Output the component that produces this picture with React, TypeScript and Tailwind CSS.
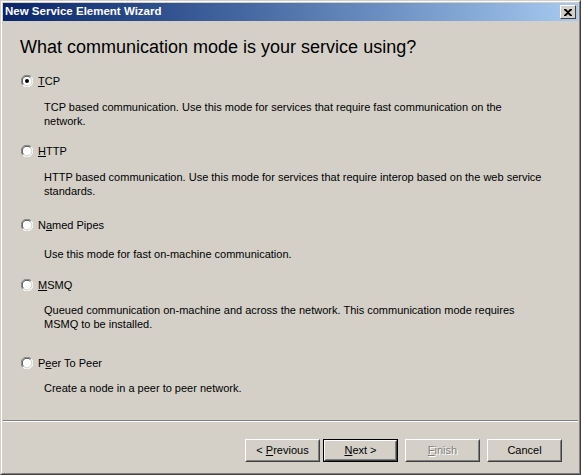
import type { ReactNode } from 'react';

const font = { fontFamily: '"Liberation Sans", Arial, sans-serif' };

function Radio({ checked }: { checked?: boolean }) {
  return (
    <svg width="12" height="12" viewBox="0 0 12 12" className="shrink-0">
      <circle cx="6" cy="6" r="5.5" fill="#ffffff" />
      <path d="M10.2 1.8 A5.5 5.5 0 0 0 1.8 10.2" fill="none" stroke="#808080" strokeWidth="1" />
      <path d="M9.4 2.6 A4.5 4.5 0 0 0 2.6 9.4" fill="none" stroke="#404040" strokeWidth="1" />
      <path d="M1.8 10.2 A5.5 5.5 0 0 0 10.2 1.8" fill="none" stroke="#ffffff" strokeWidth="1" />
      <path d="M2.6 9.4 A4.5 4.5 0 0 0 9.4 2.6" fill="none" stroke="#d4d0c8" strokeWidth="1" />
      {checked && <circle cx="6" cy="6" r="2" fill="#000000" />}
    </svg>
  );
}

type Option = {
  label: ReactNode;
  desc: ReactNode;
  checked?: boolean;
  mt: string;
  descMt: string;
};

const options: Option[] = [
  {
    label: <><u>T</u>CP</>,
    desc: <>TCP based communication. Use this mode for services that require fast communication on the<br />network.</>,
    checked: true,
    mt: 'mt-[17px]',
    descMt: 'mt-[12px]',
  },
  {
    label: <><u>H</u>TTP</>,
    desc: <>HTTP based communication. Use this mode for services that require interop based on the web service<br />standards.</>,
    mt: 'mt-[16px]',
    descMt: 'mt-[12px]',
  },
  {
    label: <>N<u>a</u>med Pipes</>,
    desc: <>Use this mode for fast on-machine communication.</>,
    mt: 'mt-[20px]',
    descMt: 'mt-[15px]',
  },
  {
    label: <><u>M</u>SMQ</>,
    desc: <>Queued communication on-machine and across the network. This communication mode requires<br />MSMQ to be installed.</>,
    mt: 'mt-[17px]',
    descMt: 'mt-[11px]',
  },
  {
    label: <>P<u>e</u>er To Peer</>,
    desc: <>Create a node in a peer to peer network.</>,
    mt: 'mt-[25px]',
    descMt: 'mt-[11px]',
  },
];

function Button({ children, isDefault, disabled, className = '' }: { children: ReactNode; isDefault?: boolean; disabled?: boolean; className?: string }) {
  return (
    <div className={`w-[75px] h-[23px] ${isDefault ? 'border border-black' : ''} ${className}`}>
      <div className="w-full h-full border border-t-white border-l-white border-r-[#404040] border-b-[#404040]">
        <div className="w-full h-full border border-t-[#d4d0c8] border-l-[#d4d0c8] border-r-[#808080] border-b-[#808080] flex items-center justify-center text-[11px]">
          {disabled ? (
            <span className="text-[#808080] [text-shadow:1px_1px_0_#ffffff]">{children}</span>
          ) : (
            <span className="text-black">{children}</span>
          )}
        </div>
      </div>
    </div>
  );
}

export default function App() {
  return (
    <div className="w-[581px] h-[475px] bg-[#d4d0c8] text-black" style={font}>
      <div className="w-full h-full border border-t-[#d4d0c8] border-l-[#d4d0c8] border-r-[#404040] border-b-[#404040]">
        <div className="w-full h-full border border-t-white border-l-white border-r-[#808080] border-b-[#808080] p-px flex flex-col">
          {/* title bar */}
          <div className="h-[18px] shrink-0 flex items-center justify-between pl-[2px] pr-[2px] bg-gradient-to-r from-[#0a246a] to-[#a6caf0]">
            <span className="text-white font-bold text-[11.5px] leading-none">New Service Element Wizard</span>
            <div className="w-[16px] h-[14px] bg-[#d4d0c8] border border-t-white border-l-white border-r-[#404040] border-b-[#404040] flex items-center justify-center">
              <svg width="8" height="7" viewBox="0 0 8 7">
                <path d="M0 0h2l2 2 2-2h2v1L5 3.5 8 6v1H6L4 5 2 7H0V6l3-2.5L0 1z" fill="#000000" />
              </svg>
            </div>
          </div>

          {/* body */}
          <div className="flex-1 flex flex-col">
            <div className="pl-[17px] mt-[16px] text-[18px] leading-[20px]">What communication mode is your service using?</div>
            {options.map((o, i) => (
              <div key={i} className={o.mt}>
                <div className="flex items-center gap-[5px] pl-[18px] h-[14px] text-[11px]">
                  <Radio checked={o.checked} />
                  <span>{o.label}</span>
                </div>
                <div className={`${o.descMt} pl-[41px] text-[11px] leading-[14px]`}>{o.desc}</div>
              </div>
            ))}
          </div>

          {/* separator */}
          <div className="h-[2px] shrink-0 border-t border-t-[#808080] border-b border-b-white" />

          {/* buttons */}
          <div className="h-[50px] shrink-0 flex items-start pt-[17px] pl-[242px]">
            <Button><span>&lt; <u>P</u>revious</span></Button>
            <Button isDefault className="ml-[3px]"><span><u>N</u>ext &gt;</span></Button>
            <Button disabled className="ml-[7px]"><span><u>F</u>inish</span></Button>
            <Button className="ml-[7px]"><span>Cancel</span></Button>
          </div>
        </div>
      </div>
    </div>
  );
}
